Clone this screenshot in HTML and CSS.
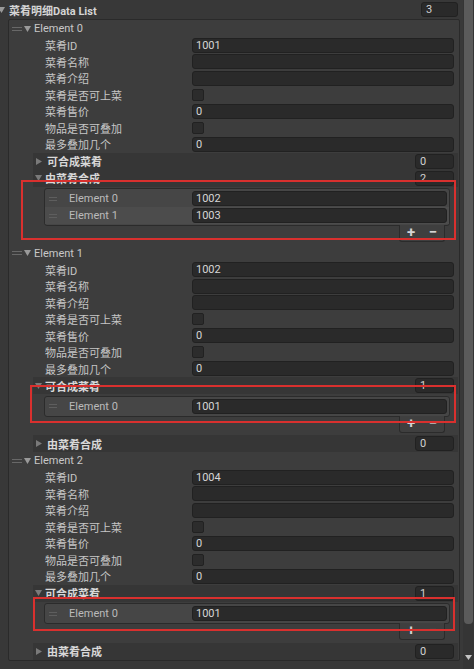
FILE: index.html
```html
<!DOCTYPE html>
<html lang="zh">
<head>
<meta charset="utf-8">
<title>菜肴明细Data List</title>
<link rel="stylesheet" href="styles.css">
</head>
<body>
<div class="app">
  <div class="main">
    <div class="top">
      <svg class="tri-top" width="7" height="6" viewBox="0 0 7 6"><path d="M0 0H7L3.5 6Z" fill="#9a9a9a"/></svg>
      <span class="title">菜肴明细Data List</span>
      <span class="count top-count">3</span>
    </div>
    <div class="panel">
      <!-- Element 0 -->
      <div class="el-head"><span class="handle"></span><svg class="tri" width="7" height="6" viewBox="0 0 7 6"><path d="M0 0H7L3.5 6Z" fill="#9a9a9a"/></svg><span>Element 0</span></div>
      <div class="prop"><span class="label">菜肴ID</span><span class="field">1001</span></div>
      <div class="prop"><span class="label">菜肴名称</span><span class="field"></span></div>
      <div class="prop"><span class="label">菜肴介绍</span><span class="field"></span></div>
      <div class="prop"><span class="label">菜肴是否可上菜</span><span class="check"></span></div>
      <div class="prop"><span class="label">菜肴售价</span><span class="field">0</span></div>
      <div class="prop"><span class="label">物品是否可叠加</span><span class="check"></span></div>
      <div class="prop"><span class="label">最多叠加几个</span><span class="field">0</span></div>
      <div class="fold"><svg class="tri-r" width="6" height="7" viewBox="0 0 6 7"><path d="M0 0L6 3.5L0 7Z" fill="#7a7a7a"/></svg><span class="fold-title">可合成菜肴</span><span class="count">0</span></div>
      <div class="fold"><svg class="tri-d" width="7" height="6" viewBox="0 0 7 6"><path d="M0 0H7L3.5 6Z" fill="#7a7a7a"/></svg><span class="fold-title">由菜肴合成</span><span class="count">2</span></div>
      <div class="list">
        <div class="item"><span class="handle small"></span><span class="item-label">Element 0</span><span class="field item-field">1002</span></div>
        <div class="item alt"><span class="handle small"></span><span class="item-label">Element 1</span><span class="field item-field">1003</span></div>
      </div>
      <div class="footer"><span>+</span><span>−</span></div>

      <!-- Element 1 -->
      <div class="el-head"><span class="handle"></span><svg class="tri" width="7" height="6" viewBox="0 0 7 6"><path d="M0 0H7L3.5 6Z" fill="#9a9a9a"/></svg><span>Element 1</span></div>
      <div class="prop"><span class="label">菜肴ID</span><span class="field">1002</span></div>
      <div class="prop"><span class="label">菜肴名称</span><span class="field"></span></div>
      <div class="prop"><span class="label">菜肴介绍</span><span class="field"></span></div>
      <div class="prop"><span class="label">菜肴是否可上菜</span><span class="check"></span></div>
      <div class="prop"><span class="label">菜肴售价</span><span class="field">0</span></div>
      <div class="prop"><span class="label">物品是否可叠加</span><span class="check"></span></div>
      <div class="prop"><span class="label">最多叠加几个</span><span class="field">0</span></div>
      <div class="fold"><svg class="tri-d" width="7" height="6" viewBox="0 0 7 6"><path d="M0 0H7L3.5 6Z" fill="#7a7a7a"/></svg><span class="fold-title">可合成菜肴</span><span class="count">1</span></div>
      <div class="list">
        <div class="item"><span class="handle small"></span><span class="item-label">Element 0</span><span class="field item-field">1001</span></div>
      </div>
      <div class="footer"><span>+</span><span>−</span></div>
      <div class="fold"><svg class="tri-r" width="6" height="7" viewBox="0 0 6 7"><path d="M0 0L6 3.5L0 7Z" fill="#7a7a7a"/></svg><span class="fold-title">由菜肴合成</span><span class="count">0</span></div>

      <!-- Element 2 -->
      <div class="el-head"><span class="handle"></span><svg class="tri" width="7" height="6" viewBox="0 0 7 6"><path d="M0 0H7L3.5 6Z" fill="#9a9a9a"/></svg><span>Element 2</span></div>
      <div class="prop"><span class="label">菜肴ID</span><span class="field">1004</span></div>
      <div class="prop"><span class="label">菜肴名称</span><span class="field"></span></div>
      <div class="prop"><span class="label">菜肴介绍</span><span class="field"></span></div>
      <div class="prop"><span class="label">菜肴是否可上菜</span><span class="check"></span></div>
      <div class="prop"><span class="label">菜肴售价</span><span class="field">0</span></div>
      <div class="prop"><span class="label">物品是否可叠加</span><span class="check"></span></div>
      <div class="prop"><span class="label">最多叠加几个</span><span class="field">0</span></div>
      <div class="fold"><svg class="tri-d" width="7" height="6" viewBox="0 0 7 6"><path d="M0 0H7L3.5 6Z" fill="#7a7a7a"/></svg><span class="fold-title">可合成菜肴</span><span class="count">1</span></div>
      <div class="list">
        <div class="item"><span class="handle small"></span><span class="item-label">Element 0</span><span class="field item-field">1001</span></div>
      </div>
      <div class="footer"><span>+</span><span>−</span></div>
      <div class="fold"><svg class="tri-r" width="6" height="7" viewBox="0 0 6 7"><path d="M0 0L6 3.5L0 7Z" fill="#7a7a7a"/></svg><span class="fold-title">由菜肴合成</span><span class="count">0</span></div>
    </div>
  </div>
  <div class="scroll">
    <div class="thumb"></div>
    <div class="track"></div>
    <svg class="arrow" width="7" height="5" viewBox="0 0 7 5"><path d="M0 0H7L3.5 5Z" fill="#c4c4c4"/></svg>
  </div>

  <div class="mark mark-1"></div>
  <div class="mark mark-2"></div>
  <div class="mark mark-3"></div>
</div>
</body>
</html>
```

FILE: styles.css
```css
* { box-sizing: border-box; }
html, body { margin: 0; padding: 0; }
body {
  background: #383838;
  font-family: Roboto, "Noto Sans CJK SC", "Noto Sans", sans-serif;
  font-size: 11px;
  color: #c6c6c6;
  overflow: hidden;
}
.app {
  display: flex;
  height: 669px;
  position: relative;
}
.main { width: 460px; }

/* top header */
.top {
  height: 19px;
  display: flex;
  align-items: center;
}
.tri-top { margin-left: -2px; }
.title {
  margin-left: 4px;
  font-weight: bold;
  color: #d4d4d4;
}
.count {
  margin-left: auto;
  width: 39px;
  height: 15px;
  line-height: 13px;
  padding-left: 4px;
  background: #2a2a2a;
  border: 1px solid #212121;
  border-radius: 3px;
  color: #d2d2d2;
  font-weight: normal;
}
.top-count { margin-right: 2px; width: 37px; }

/* panel */
.panel {
  margin-left: 8px;
  width: 452px;
  height: 642px;
  background: #3d3d3d;
  border: 1px solid #2a2a2a;
  border-radius: 2px;
}

.el-head {
  height: 17px;
  display: flex;
  align-items: center;
  padding-left: 3px;
  color: #c8c8c8;
}
.handle {
  width: 10px;
  height: 4px;
  border-top: 1px solid #686868;
  border-bottom: 1px solid #686868;
}
.el-head .tri { margin-left: 2px; margin-right: 3px; }

.prop {
  height: 16.5px;
  display: flex;
  align-items: center;
  padding-left: 36px;
}
.label {
  width: 147px;
  flex: none;
  color: #c6c6c6;
}
.field {
  width: 262px;
  height: 15px;
  line-height: 13px;
  padding-left: 3px;
  background: #2a2a2a;
  border: 1px solid #212121;
  border-radius: 3px;
  color: #d6d6d6;
}
.check {
  width: 12px;
  height: 12px;
  background: #2c2c2c;
  border: 1px solid #212121;
  border-radius: 2px;
}

/* foldout rows */
.fold {
  height: 17px;
  margin-left: 24px;
  margin-right: 1px;
  display: flex;
  align-items: center;
  padding-left: 2px;
  background: #363636;
}
.tri-r { margin-left: 1px; margin-right: 5px; }
.tri-d { margin-right: 3px; }
.fold-title {
  font-weight: bold;
  color: #d8d8d8;
}
.fold .count { margin-right: 4px; }

/* inner list */
.list {
  margin-top: 1.5px;
  margin-left: 35px;
  width: 406px;
  background: #464646;
  border: 1px solid #2b2b2b;
  border-radius: 3px;
  padding: 1px 0;
}
.item {
  height: 17px;
  display: flex;
  align-items: center;
  padding-left: 4px;
}
.item.alt { background: #4c4c4c; }
.handle.small {
  width: 8px;
  height: 4px;
  border-color: #5e5e5e;
  flex: none;
}
.item-label {
  margin-left: 12px;
  width: 123px;
  color: #bababa;
}
.item-field { width: 255px; }

.footer {
  margin-top: -1px;
  margin-left: 390px;
  margin-bottom: 2.5px;
  width: 46px;
  height: 17px;
  display: flex;
  background: #3f3f3f;
  border: 1px solid #2b2b2b;
  border-top: none;
  border-radius: 0 0 3px 3px;
  color: #d4d4d4;
  font-size: 15px;
  line-height: 15px;
  font-weight: bold;
}
.footer span {
  flex: 1;
  text-align: center;
}

/* scrollbar */
.scroll {
  flex: 1;
  display: flex;
  flex-direction: column;
  align-items: flex-end;
  background: #353535;
  border-left: 3px solid #393939;
}
.thumb {
  width: 9px;
  height: 624px;
  margin-right: 1px;
  background: #5b5b5b;
  border-radius: 0 0 4px 4px;
}
.track { flex: 1; }
.arrow {
  margin: 0 2px 9px 0;
}

/* red annotation boxes */
.mark {
  position: absolute;
  border: 2px solid #d9302e;
  pointer-events: none;
}
.mark-1 { left: 21px; top: 180px; width: 435px; height: 60px; }
.mark-2 { left: 30px; top: 385px; width: 426px; height: 38px; }
.mark-3 { left: 33px; top: 597px; width: 422px; height: 34px; }
```
